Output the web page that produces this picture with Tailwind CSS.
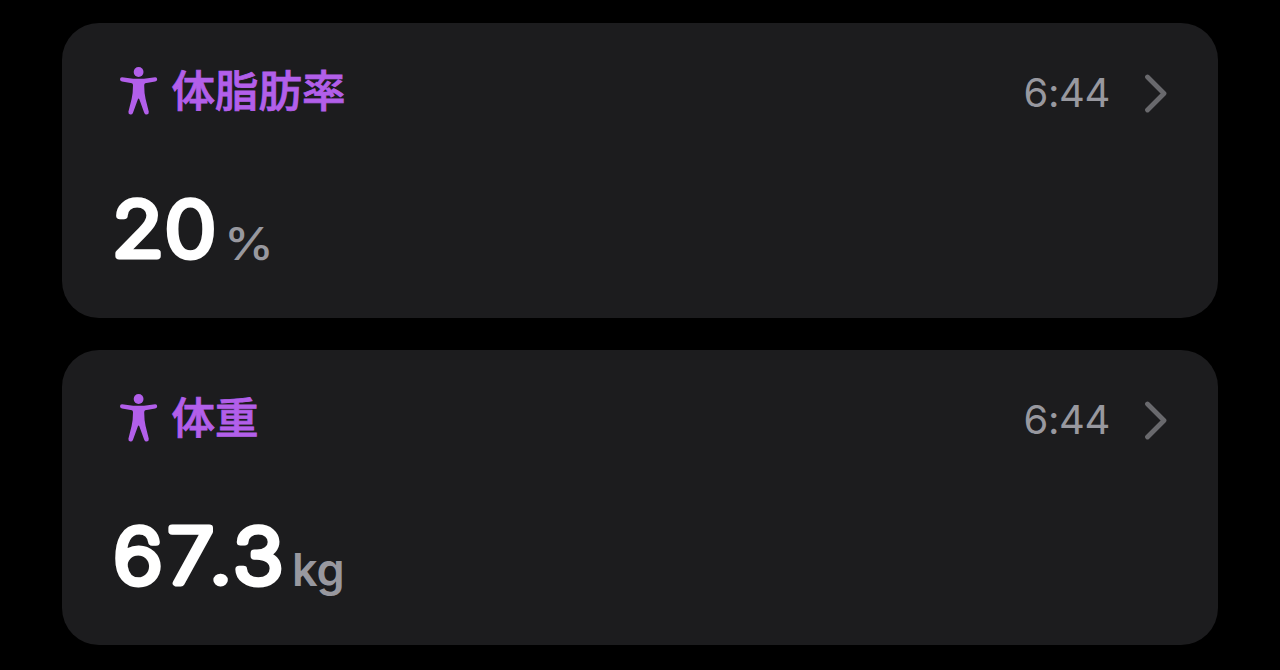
<!DOCTYPE html>
<html lang="ja">
<head>
  <meta charset="UTF-8" />
  <meta name="viewport" content="width=device-width, initial-scale=1.0"/>
  <title>ヘルスケア</title>
  <script src="https://cdn.jsdelivr.net/npm/@tailwindcss/browser@4"></script>
</head>
<body class="bg-black h-[670px] overflow-hidden px-[62px] pt-[23px] font-['Inter','Noto_Sans_CJK_JP',sans-serif]">
  <main class="flex flex-col gap-8">

    <section class="h-[295px] rounded-[37px] bg-[#1c1c1e] pl-[52px] pr-[50px] pt-[40px]">
      <div class="flex h-[60px] items-center justify-between">
        <div class="flex items-center pb-1">
          <svg class="ml-[5px] h-[50px] w-[40px] text-[#b25fea]" viewBox="0 0 40 50" fill="currentColor">
            <circle cx="19.6" cy="6" r="4.9"/>
            <path d="M3 11.2Q1 11.2 1 13.2Q1 15 3 15.4L13 17.2Q14 17.4 14 19.5Q14 27 12.6 33L9.4 45.7Q9.2 48.2 11.2 48.6Q13.4 48.8 14 46.7L18.8 33.5Q19.6 31.5 20.4 33.5L25.2 46.7Q25.8 48.8 28 48.6Q30 48.2 29.8 45.7L26.6 33Q25.2 27 25.2 19.5Q25.2 17.4 26.2 17.2L36.2 15.4Q38.2 15 38.2 13.2Q38.2 11.2 36.2 11.2L25 12.8H14.2Z"/>
          </svg>
          <h2 class="ml-[12.5px] text-[43.5px] leading-[58px] font-medium text-[#b25fea] [-webkit-text-stroke:0.8px_#b25fea]">体脂肪率</h2>
        </div>
        <div class="flex items-center text-[#98989f]">
          <time class="text-[40px] leading-[60px] tracking-[-0.4px]">6:44</time>
          <svg class="ml-[34px] h-[40px] w-[24px] text-[#69696d]" viewBox="0 0 24 40" fill="none" stroke="currentColor" stroke-width="4.8" stroke-linecap="round" stroke-linejoin="round">
            <path d="M3.5 4L20 20.5L3.5 37"/>
          </svg>
        </div>
      </div>
      <svg class="mt-[62px] h-[100px] w-[400px] overflow-visible" viewBox="0 0 400 100">
        <text x="-1.8 45.5" y="71" font-size="75" font-weight="200" fill="#fff" stroke="#fff" stroke-width="7" stroke-linejoin="round" transform="scale(1.12 1)">20</text>
        <text x="110" y="75" font-size="45" font-weight="500" fill="#98989f" textLength="50" lengthAdjust="spacingAndGlyphs">%</text>
      </svg>
    </section>

    <section class="h-[295px] rounded-[37px] bg-[#1c1c1e] pl-[52px] pr-[50px] pt-[40px]">
      <div class="flex h-[60px] items-center justify-between">
        <div class="flex items-center pb-1">
          <svg class="ml-[5px] h-[50px] w-[40px] text-[#b25fea]" viewBox="0 0 40 50" fill="currentColor">
            <circle cx="19.6" cy="6" r="4.9"/>
            <path d="M3 11.2Q1 11.2 1 13.2Q1 15 3 15.4L13 17.2Q14 17.4 14 19.5Q14 27 12.6 33L9.4 45.7Q9.2 48.2 11.2 48.6Q13.4 48.8 14 46.7L18.8 33.5Q19.6 31.5 20.4 33.5L25.2 46.7Q25.8 48.8 28 48.6Q30 48.2 29.8 45.7L26.6 33Q25.2 27 25.2 19.5Q25.2 17.4 26.2 17.2L36.2 15.4Q38.2 15 38.2 13.2Q38.2 11.2 36.2 11.2L25 12.8H14.2Z"/>
          </svg>
          <h2 class="ml-[12.5px] text-[43.5px] leading-[58px] font-medium text-[#b25fea] [-webkit-text-stroke:0.8px_#b25fea]">体重</h2>
        </div>
        <div class="flex items-center text-[#98989f]">
          <time class="text-[40px] leading-[60px] tracking-[-0.4px]">6:44</time>
          <svg class="ml-[34px] h-[40px] w-[24px] text-[#69696d]" viewBox="0 0 24 40" fill="none" stroke="currentColor" stroke-width="4.8" stroke-linecap="round" stroke-linejoin="round">
            <path d="M3.5 4L20 20.5L3.5 37"/>
          </svg>
        </div>
      </div>
      <svg class="mt-[62px] h-[100px] w-[400px] overflow-visible" viewBox="0 0 400 100">
        <text x="-0.5 47.8 84.8 106.5" y="71" font-size="75" font-weight="200" fill="#fff" stroke="#fff" stroke-width="7" stroke-linejoin="round" transform="scale(1.12 1)">67.3</text>
        <text x="178" y="74" font-size="45" font-weight="600" fill="#98989f">kg</text>
      </svg>
    </section>

  </main>
</body>
</html>
